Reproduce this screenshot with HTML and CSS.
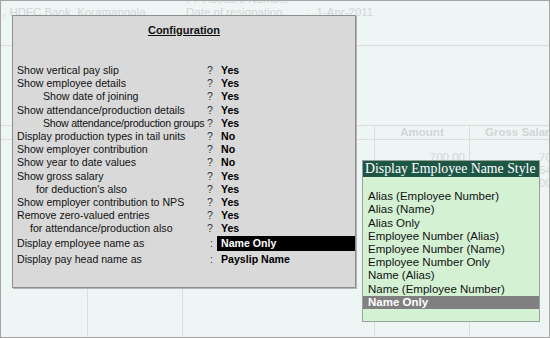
FILE: index.html
```html
<!DOCTYPE html>
<html lang="en">
<head>
  <meta charset="UTF-8" />
  <title>Configuration</title>
  <link rel="stylesheet" href="styles.css">
</head>
<body>
<div class="screen">
  <div class="info">
    <div class="info-row top">
      <span class="info-a"></span>
      <span class="info-b">PF Account Number</span>
      <span class="info-c"></span>
    </div>
    <div class="info-row">
      <span class="info-a">, HDFC Bank, Koramangala</span>
      <span class="info-b">Date of resignation</span>
      <span class="info-c">:&nbsp; 1-Apr-2011</span>
    </div>
  </div>
  <div class="gap"></div>
  <div class="thead">
    <div class="cell"></div>
    <div class="cell"></div>
    <div class="cell"></div>
    <div class="cell head">Amount</div>
    <div class="cell head left">Gross Salary</div>
  </div>
  <div class="tbody">
    <div class="cell"></div>
    <div class="cell"></div>
    <div class="cell"></div>
    <div class="cell num">700.00</div>
    <div class="cell num2">700<br>54<br>00</div>
  </div>

  <div class="config">
    <div class="config-title"><span>Configuration</span></div>
    <div class="rows">
      <div class="row"><span class="lbl">Show vertical pay slip</span><span class="mark">?</span><span class="val">Yes</span></div>
      <div class="row"><span class="lbl">Show employee details</span><span class="mark">?</span><span class="val">Yes</span></div>
      <div class="row"><span class="lbl in1">Show date of joining</span><span class="mark">?</span><span class="val">Yes</span></div>
      <div class="row"><span class="lbl">Show attendance/production details</span><span class="mark">?</span><span class="val">Yes</span></div>
      <div class="row"><span class="lbl in1 tight">Show attendance/production groups</span><span class="mark">?</span><span class="val">Yes</span></div>
      <div class="row"><span class="lbl">Display production types in tail units</span><span class="mark">?</span><span class="val">No</span></div>
      <div class="row"><span class="lbl">Show employer contribution</span><span class="mark">?</span><span class="val">No</span></div>
      <div class="row"><span class="lbl">Show year to date values</span><span class="mark">?</span><span class="val">No</span></div>
      <div class="row"><span class="lbl">Show gross salary</span><span class="mark">?</span><span class="val">Yes</span></div>
      <div class="row"><span class="lbl in2">for deduction's also</span><span class="mark">?</span><span class="val">Yes</span></div>
      <div class="row"><span class="lbl">Show employer contribution to NPS</span><span class="mark">?</span><span class="val">Yes</span></div>
      <div class="row"><span class="lbl">Remove zero-valued entries</span><span class="mark">?</span><span class="val">Yes</span></div>
      <div class="row"><span class="lbl in3">for attendance/production also</span><span class="mark">?</span><span class="val">Yes</span></div>
      <div class="row tall"><span class="lbl">Display employee name as</span><span class="mark">:</span><span class="val active">Name Only</span></div>
      <div class="row tall"><span class="lbl">Display pay head name as</span><span class="mark">:</span><span class="val">Payslip Name</span></div>
    </div>
  </div>

  <div class="picker">
    <div class="picker-title">Display Employee Name Style</div>
    <ul class="picker-list">
      <li class="blank"></li>
      <li>Alias (Employee Number)</li>
      <li>Alias (Name)</li>
      <li>Alias Only</li>
      <li>Employee Number (Alias)</li>
      <li>Employee Number (Name)</li>
      <li>Employee Number Only</li>
      <li>Name (Alias)</li>
      <li>Name (Employee Number)</li>
      <li class="selected">Name Only</li>
    </ul>
  </div>
</div>
</body>
</html>
```

FILE: styles.css
```css
* { box-sizing: border-box; }
html, body { margin:0; padding:0; background:#fff; font-family:"Liberation Sans", Arial, sans-serif; }
.screen {
  position:relative; width:550px; height:338px; overflow:hidden;
  display:flex; flex-direction:column;
  background:#eef6f5; border:1px solid #a4a4a4;
}

/* faded background report */
.info { height:45px; border-bottom:1px solid #dcdede; color:#cfd7d7; font-size:11.5px; flex-shrink:0; }
.info-row { display:flex; height:13px; line-height:13px; white-space:nowrap; }
.info-row.top { margin-top:-8px; }
.info-a { width:185px; padding-left:2px; }
.info-b { width:121px; }
.info-c { flex:1; }
.gap { height:79px; flex-shrink:0; }
.thead, .tbody { display:grid; grid-template-columns:86px 95px 192px 95px 1fr; }
.thead { height:15px; border-top:1px solid #dcdede; border-bottom:1px solid #dcdede; flex-shrink:0; }
.tbody { flex:1; }
.cell { border-left:1px solid #dcdede; color:#cfd7d7; font-size:11.5px; line-height:13px; white-space:nowrap; }
.cell:first-child { border-left:none; }
.cell.head { font-weight:bold; text-align:center; }
.cell.head.left { text-align:left; padding-left:15px; }
.cell.num { text-align:right; padding:11px 4px 0 0; }
.cell.num2 { padding:11px 0 0 69px; }

/* configuration panel */
.config {
  position:absolute; left:11px; top:14px; width:344px; height:273px;
  background:#d9d9d9; border:1px solid #8e8e8e; box-shadow:1px 1px 0 #b4b4b4;
  color:#111; font-size:10.6px;
}
.config-title { text-align:center; padding-top:7px; height:48px; font-size:11px; font-weight:bold; line-height:14px; }
.config-title span { text-decoration:underline; }
.rows { display:flex; flex-direction:column; }
.row { display:flex; height:13.2px; line-height:13.2px; white-space:nowrap; }
.row.tall { height:15px; line-height:14px; margin-top:1px; }
.lbl { width:192px; padding-left:4px; }
.lbl.in1 { padding-left:30px; }
.lbl.in2 { padding-left:23px; }
.lbl.in3 { padding-left:17px; }
.lbl.tight { letter-spacing:-0.25px; }
.mark { width:12px; text-align:right; padding-right:4px; color:#333; }
.val { flex:1; padding-left:4px; font-weight:bold; color:#000; }
.val.active { background:#000; color:#fff; }

/* name style picker */
.picker {
  position:absolute; left:361px; top:159px; width:178px;
  background:#d4f1d4; border:1px solid #99a399;
}
.picker-title {
  height:16px; line-height:16px; padding-left:2px;
  background:#1e5646; color:#fff; white-space:nowrap;
  font-family:"Liberation Serif", "Times New Roman", serif; font-size:13.8px;
}
.picker-list { list-style:none; margin:0; padding:0 0 12px 0; font-size:11.5px; color:#111; }
.picker-list li { height:13.2px; line-height:13.2px; padding-left:5px; white-space:nowrap; }
.picker-list li.selected { background:#808080; color:#fff; font-weight:bold; }
```
